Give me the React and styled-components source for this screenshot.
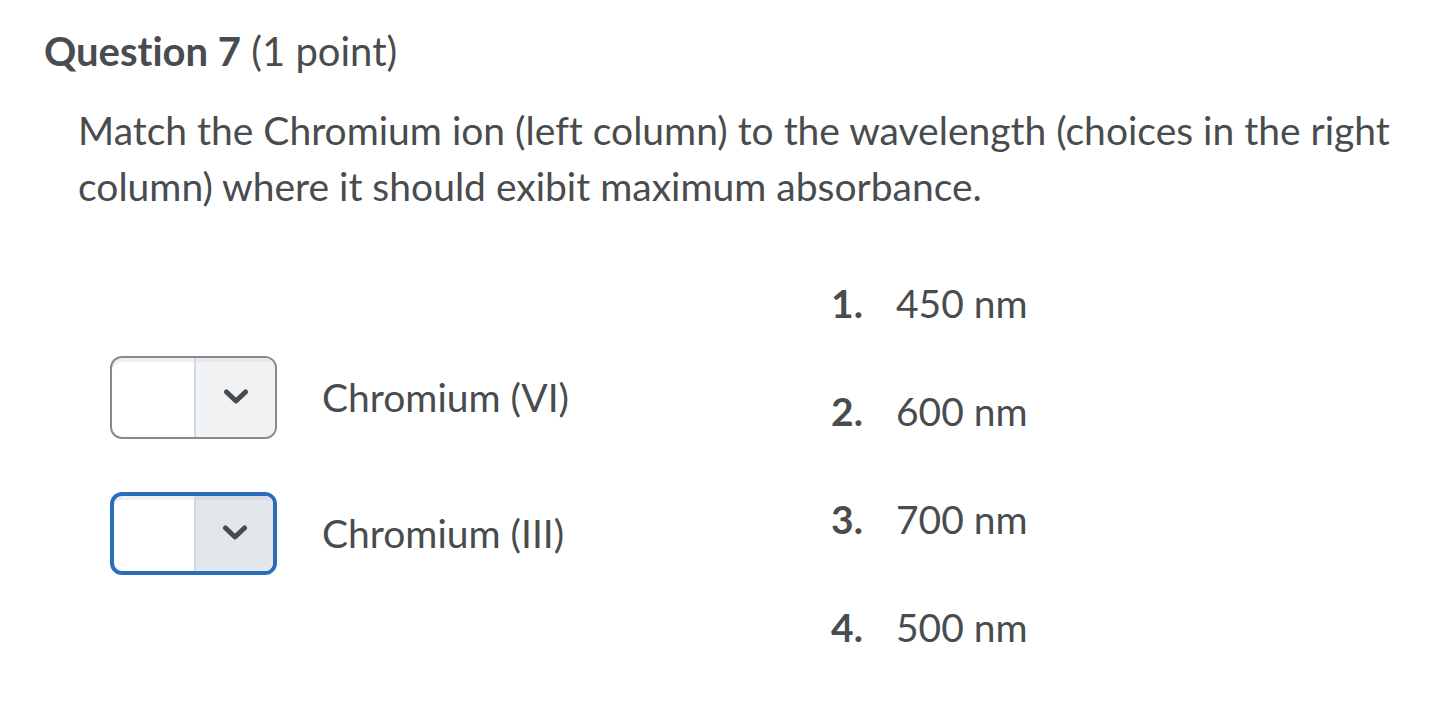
import React from "react";
import styled, { createGlobalStyle } from "styled-components";

const Global = createGlobalStyle`
  html, body {
    margin: 0;
    padding: 0;
    background: #ffffff;
  }
  body {
    font-family: Lato, "Open Sans", "Liberation Sans", sans-serif;
    font-variant-ligatures: none;
    color: #494c4e;
  }
`;

const Page = styled.div`
  padding: 23px 44px 40px 44px;
`;

const Heading = styled.h2`
  margin: 0;
  font-size: 40px;
  line-height: 56px;
  font-weight: 400;
  color: #494c4e;
  strong {
    font-weight: 700;
  }
`;

const Prompt = styled.p`
  margin: 23px 0 0 34px;
  max-width: 1340px;
  font-size: 39px;
  line-height: 56px;
`;

const MatchArea = styled.div`
  display: flex;
  align-items: center;
  margin: 65px 0 0 66px;
`;

const LeftColumn = styled.div`
  display: flex;
  flex-direction: column;
  gap: 53px;
  width: 721px;
`;

const MatchRow = styled.div`
  display: flex;
  align-items: center;
  gap: 45px;
`;

const SelectBox = styled.div`
  box-sizing: border-box;
  width: 167px;
  height: 83px;
  display: flex;
  border-radius: 12px;
  border: ${(p) => (p.$focused ? "4px solid #2a6ebb" : "2px solid #878a8c")};
  overflow: hidden;
  background: #ffffff;
  box-shadow: inset 0 4px 0 0 #f0f1f3;
`;

const SelectValue = styled.div`
  flex: 1;
`;

const SelectButton = styled.div`
  width: ${(p) => (p.$focused ? "77px" : "79px")};
  display: flex;
  align-items: center;
  justify-content: center;
  border-left: 2px solid #d3d9e3;
  background: ${(p) => (p.$focused ? "#e3e6ea" : "#f1f2f3")};
  box-shadow: inset 0 4px 0 0 ${(p) => (p.$focused ? "#d9dce1" : "#e6e8eb")};
`;

const RowLabel = styled.span`
  font-size: 39px;
  line-height: 48px;
`;

const ChoiceList = styled.ol`
  list-style: none;
  margin: 0;
  padding: 0;
  display: flex;
  flex-direction: column;
  gap: 60px;
`;

const Choice = styled.li`
  display: flex;
  align-items: center;
  font-size: 39px;
  line-height: 48px;
`;

const ChoiceNumber = styled.span`
  width: 65px;
  font-weight: 700;
`;

const Chevron = () => (
  <svg width="26" height="18" viewBox="0 0 26 18" aria-hidden="true">
    <path
      d="M3.5 4 L13 13 L22.5 4"
      fill="none"
      stroke="#494c4e"
      strokeWidth="5"
      strokeLinecap="round"
      strokeLinejoin="round"
    />
  </svg>
);

const Select = ({ focused }) => (
  <SelectBox $focused={focused}>
    <SelectValue />
    <SelectButton $focused={focused}>
      <Chevron />
    </SelectButton>
  </SelectBox>
);

const rows = [
  { label: "Chromium (VI)", focused: false },
  { label: "Chromium (III)", focused: true },
];

const choices = ["450 nm", "600 nm", "700 nm", "500 nm"];

export default function App() {
  return (
    <Page>
      <Global />
      <Heading>
        <strong>Question 7</strong> (1 point)
      </Heading>
      <Prompt>
        Match the Chromium ion (left column) to the wavelength (choices in the
        right column) where it should exibit maximum absorbance.
      </Prompt>
      <MatchArea>
        <LeftColumn>
          {rows.map((r) => (
            <MatchRow key={r.label}>
              <Select focused={r.focused} />
              <RowLabel>{r.label}</RowLabel>
            </MatchRow>
          ))}
        </LeftColumn>
        <ChoiceList>
          {choices.map((c, i) => (
            <Choice key={c}>
              <ChoiceNumber>{i + 1}.</ChoiceNumber>
              {c}
            </Choice>
          ))}
        </ChoiceList>
      </MatchArea>
    </Page>
  );
}
